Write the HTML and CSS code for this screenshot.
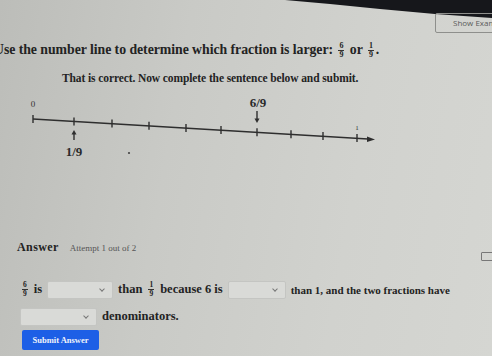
FILE: index.html
```html
<!DOCTYPE html>
<html>
<head>
<meta charset="utf-8">
<link rel="stylesheet" href="styles.css">
</head>
<body>
<div class="page">
  <svg class="bezel" width="492" height="20" viewBox="0 0 492 20"><polygon points="285,0 492,0 492,18 435,14 380,9 330,4" fill="#16171b"/></svg>
  <div class="show-btn">Show Exam</div>

  <h1 class="question">Use the number line to determine which fraction is larger: <span class="frac"><span class="num">6</span><span class="den">9</span></span> or <span class="frac"><span class="num">1</span><span class="den">9</span></span>.</h1>

  <p class="feedback">That is correct. Now complete the sentence below and submit.</p>

  <svg class="numline" width="400" height="75" viewBox="0 0 400 75">
    <g stroke="#2e2e2e" stroke-width="1.4" fill="none">
      <line x1="33" y1="29" x2="368" y2="49"/>
      <line x1="33" y1="25" x2="33" y2="33"/>
      <line x1="74" y1="27.4" x2="74" y2="35.4"/>
      <line x1="112" y1="29.6" x2="112" y2="37.6"/>
      <line x1="149" y1="31.8" x2="149" y2="39.8"/>
      <line x1="186" y1="34" x2="186" y2="42"/>
      <line x1="221" y1="36" x2="221" y2="44"/>
      <line x1="257" y1="38.2" x2="257" y2="46.2"/>
      <line x1="291" y1="40.2" x2="291" y2="48.2"/>
      <line x1="323" y1="42.1" x2="323" y2="50.1"/>
      <line x1="357" y1="44.1" x2="357" y2="52.1"/>
      <line x1="257" y1="21" x2="257" y2="30"/>
      <line x1="74" y1="50" x2="74" y2="42"/>
    </g>
    <polygon points="375,49.5 367,46.5 367,52" fill="#2e2e2e"/>
    <polygon points="257,33 254.5,28.5 259.5,28.5" fill="#2e2e2e"/>
    <polygon points="74,40 71.5,44.5 76.5,44.5" fill="#2e2e2e"/>
    <g class="nl-text">
      <text x="33" y="17" class="nl-small" text-anchor="middle">0</text>
      <text x="258" y="17" class="nl-big" text-anchor="middle">6/9</text>
      <text x="357" y="40" class="nl-tiny" text-anchor="middle">1</text>
      <text x="74" y="66" class="nl-big" text-anchor="middle">1/9</text>
    </g>
    <circle cx="129" cy="63" r="1.1" fill="#444"/>
  </svg>

  <section class="answer">
    <div class="answer-head">
      <span class="answer-title">Answer</span>
      <span class="attempt">Attempt 1 out of 2</span>
    </div>
    <div class="sentence">
      <span class="frac"><span class="num">6</span><span class="den">9</span></span>
      <span>is</span>
      <span class="select w66"><span class="chev"></span></span>
      <span>than</span>
      <span class="frac"><span class="num">1</span><span class="den">9</span></span>
      <span>because 6 is</span>
      <span class="select w58"><span class="chev"></span></span>
      <span class="small">than 1, and the two fractions have</span>
    </div>
    <div class="sentence row2">
      <span class="select w77"><span class="chev"></span></span>
      <span>denominators.</span>
    </div>
    <button class="submit">Submit Answer</button>
  </section>
  <div class="kbd"></div>
</div>
</body>
</html>
```

FILE: styles.css
```css
html, body {
  margin: 0;
  padding: 0;
}
body {
  width: 492px;
  height: 356px;
  overflow: hidden;
  font-family: "Liberation Serif", "DejaVu Serif", serif;
  color: #232323;
}
.page {
  position: relative;
  width: 492px;
  height: 356px;
  overflow: hidden;
  background: linear-gradient(100deg, #bcbdb9 0%, #c9cac6 35%, #d1d2ce 70%, #d5d6d2 100%);
}
.bezel {
  position: absolute;
  left: 0;
  top: 0;
}
.show-btn {
  position: absolute;
  left: 435px;
  top: 13px;
  width: 70px;
  height: 20px;
  box-sizing: border-box;
  border: 1px solid #8e8f8c;
  border-radius: 2px;
  padding-left: 17px;
  font-family: "Open Sans", "Liberation Sans", sans-serif;
  font-size: 8px;
  line-height: 18px;
  color: #5a5b5a;
  white-space: nowrap;
}
.question {
  margin: 0;
  padding-top: 42px;
  margin-left: -6px;
  font-size: 13.8px;
  font-weight: bold;
  line-height: 16px;
  white-space: nowrap;
  letter-spacing: -0.05px;
}
.frac {
  display: inline-flex;
  flex-direction: column;
  align-items: center;
  vertical-align: middle;
  font-size: 8px;
  line-height: 8px;
  margin: 0 2px;
}
.frac .num {
  border-bottom: 1px solid #333;
  padding: 0 1px;
}
.feedback {
  margin: 12px 0 0 62px;
  font-size: 11.5px;
  font-weight: bold;
  line-height: 14px;
  white-space: nowrap;
  letter-spacing: -0.1px;
}
.numline {
  display: block;
  margin-top: 5px;
}
.nl-small { font-size: 9px; font-family: "Liberation Serif", serif; fill: #333; }
.nl-big { font-size: 13px; font-weight: bold; font-family: "Liberation Serif", serif; fill: #2a2a2a; }
.nl-tiny { font-size: 7px; font-family: "Liberation Serif", serif; fill: #333; }
.answer {
  margin-top: 75px;
  padding-left: 17px;
}
.answer-head {
  display: flex;
  align-items: baseline;
  gap: 11px;
  height: 14px;
}
.answer-title {
  font-size: 12px;
  font-weight: bold;
  letter-spacing: 0.4px;
}
.attempt {
  font-size: 9px;
  color: #555;
}
.sentence {
  display: flex;
  align-items: center;
  gap: 5px;
  margin-top: 26px;
  margin-left: 4px;
  font-size: 12.5px;
  font-weight: bold;
  height: 19px;
  white-space: nowrap;
}
.sentence .small {
  font-size: 11px;
}
.sentence .frac {
  margin: 0 1px;
  font-size: 7.5px;
}
.row2 {
  margin-top: 8px;
  margin-left: 3px;
}
.select {
  position: relative;
  display: inline-block;
  height: 18px;
  box-sizing: border-box;
  border: 1px solid #c4c5c2;
  border-radius: 2px;
  background: #d9dad7;
}
.w66 { width: 66px; }
.w58 { width: 58px; }
.w77 { width: 77px; }
.chev {
  position: absolute;
  right: 8px;
  top: 5px;
  width: 3px;
  height: 3px;
  border-right: 1px solid #777;
  border-bottom: 1px solid #777;
  transform: rotate(45deg);
}
.submit {
  display: block;
  margin-top: 4px;
  margin-left: 5px;
  width: 77px;
  height: 20px;
  border: none;
  border-radius: 2px;
  background: #1d5fe6;
  color: #f2f4fa;
  font-family: "Liberation Serif", serif;
  font-size: 8.5px;
  font-weight: bold;
  padding: 0;
}
.kbd {
  position: absolute;
  left: 481px;
  top: 252px;
  width: 14px;
  height: 7px;
  border: 1px solid #777;
  border-radius: 1px;
}
```
